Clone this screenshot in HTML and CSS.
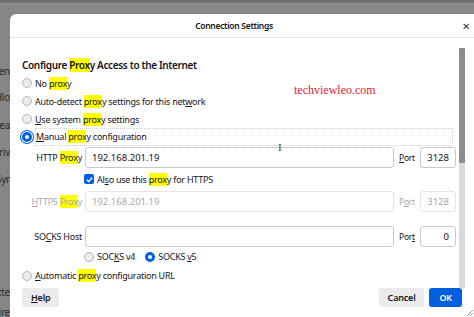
FILE: index.html
```html
<!DOCTYPE html>
<html lang="en">
<head>
  <meta charset="UTF-8">
  <title>Connection Settings</title>
  <link rel="stylesheet" href="styles.css">
</head>
<body>

  <div class="app">
    <div class="app-top"></div>
    <div class="app-side">
      <span style="top:50px">Gen</span>
      <span style="top:76px">Hlo</span>
      <span style="top:104px">Lea</span>
      <span style="top:131px">Priv</span>
      <span style="top:158px">Syr</span>
      <span style="top:271px">Exte</span>
      <span style="top:291px">Fire</span>
    </div>
  </div>

  <div class="dialog">
    <div class="dialog-head">
      <span class="dialog-title">Connection Settings</span>
      <span class="dialog-close">&#x2715;</span>
    </div>

    <div class="dialog-body">
      <h2 class="section-title">Configure <mark>Prox</mark>y Access to the Internet</h2>

      <label class="radio-row"><span class="radio"></span><span>No <mark>prox</mark>y</span></label>
      <label class="radio-row"><span class="radio"></span><span>Auto-detect <mark>prox</mark>y settings for this net<u>w</u>ork</span></label>
      <label class="radio-row"><span class="radio"></span><span><u>U</u>se system <mark>prox</mark>y settings</span></label>
      <label class="radio-row"><span class="radio checked focus"></span><span class="focus-box"><u>M</u>anual <mark>prox</mark>y configuration</span></label>

      <div class="proxy-row">
        <span class="proxy-label">HTTP <mark>Prox</mark>y</span>
        <span class="field">192.168.201.19</span>
        <span class="port-label"><u>P</u>ort</span>
        <span class="field port">3128</span>
      </div>

      <label class="check-row"><span class="checkbox"><svg viewBox="0 0 10 10" width="9" height="9"><path d="M2 5.2 L4.2 7.3 L8 2.8" fill="none" stroke="#fff" stroke-width="1.5"/></svg></span><span>Al<u>s</u>o use this <mark>prox</mark>y for HTTPS</span></label>

      <div class="proxy-row disabled">
        <span class="proxy-label"><u>H</u>TTPS <mark>Prox</mark>y</span>
        <span class="field">192.168.201.19</span>
        <span class="port-label">P<u>o</u>rt</span>
        <span class="field port">3128</span>
      </div>

      <div class="proxy-row socks">
        <span class="proxy-label">SO<u>C</u>KS Host</span>
        <span class="field"></span>
        <span class="port-label">Por<u>t</u></span>
        <span class="field port">0</span>
      </div>

      <div class="socks-row">
        <label class="radio-row"><span class="radio"></span><span>SOC<u>K</u>S v4</span></label>
        <label class="radio-row"><span class="radio checked"></span><span>SOCKS <u>v</u>5</span></label>
      </div>

      <label class="radio-row auto-row"><span class="radio"></span><span><u>A</u>utomatic <mark>prox</mark>y configuration URL</span></label>

      <div class="watermark">techviewleo.com</div>
      <div class="cursor">I</div>
    </div>

    <div class="dialog-foot">
      <button class="btn"><u>H</u>elp</button>
      <span class="spacer"></span>
      <button class="btn">Cancel</button>
      <button class="btn primary">OK</button>
    </div>

    <div class="scrollbar"><div class="thumb"></div></div>
    <svg class="grip" viewBox="0 0 10 10" width="10" height="10"><path d="M9 3 L3 9 M9 6 L6 9" stroke="#999" stroke-width="1"/></svg>
  </div>

</body>
</html>
```

FILE: styles.css
```css
body {
  margin: 0;
  width: 474px;
  height: 317px;
  overflow: hidden;
  background: #7f7f7f;
  font-family: 'Noto Sans', 'Open Sans', sans-serif;
  font-size: 9px;
  letter-spacing: -0.25px;
  color: #15141a;
  position: relative;
}

.app-top {
  height: 14px;
  background: linear-gradient(#6e6e6e 0, #6e6e6e 2px, #8c8c8c 3px, #858585 100%);
}

.app-side {
  position: relative;
  width: 10px;
  height: 303px;
  overflow: hidden;
  background: #868686;
}

.app-side span {
  position: absolute;
  right: 0;
  color: #2a2a2a;
  font-size: 10px;
  white-space: nowrap;
}

/* the modal sits over the app */
.dialog {
  position: absolute;
  left: 10px;
  top: 14px;
  right: 0;
  bottom: 0;
  background: #fff;
  border-top-left-radius: 6px;
  display: flex;
  flex-direction: column;
}

.dialog-head {
  height: 23px;
  border-bottom: 1px solid #e4e4e4;
  display: flex;
  align-items: center;
  justify-content: center;
  padding-right: 16px;
  position: relative;
}

.dialog-title {
  font-weight: 600;
  font-size: 8.5px;
  letter-spacing: -0.3px;
}

.dialog-close {
  position: absolute;
  right: 4px;
  top: 5px;
  font-size: 10px;
  color: #333;
}

.dialog-body {
  flex: 1;
  padding: 0 21px 0 12px;
  position: relative;
}

mark {
  background: #ffff00;
  color: inherit;
}

u {
  text-decoration-thickness: 1px;
  text-underline-offset: 1px;
}

.section-title {
  margin: 0;
  height: 18px;
  padding-top: 18px;
  font-size: 10px;
  letter-spacing: -0.35px;
  font-weight: 600;
  line-height: 18px;
}

.radio-row {
  display: flex;
  align-items: center;
  height: 18px;
  gap: 3px;
  white-space: nowrap;
}

.radio {
  width: 8px;
  height: 8px;
  border: 1px solid #b5b5b8;
  border-radius: 50%;
  background: #ececee;
  flex: none;
}

.radio.checked {
  width: 4px;
  height: 4px;
  border: 3px solid #0060df;
  background: #fff;
}

.radio.focus {
  box-shadow: 0 0 0 1px #fff, 0 0 0 2px #0060df;
}

.focus-box {
  flex: 1;
  height: 16px;
  line-height: 16px;
  border: 1px dotted #cfcfd8;
}

.proxy-row {
  display: grid;
  grid-template-columns: 61px 309px 22px 36px;
  column-gap: 2px;
  align-items: center;
  height: 21px;
  margin-top: 1px;
}

.proxy-label {
  text-align: right;
  padding-right: 1px;
}

.field {
  height: 19px;
  line-height: 19px;
  border: 1px solid #c9c9ce;
  border-radius: 3px;
  padding: 0 6px;
  font-size: 9.5px;
  letter-spacing: 0;
}

.field.port {
  text-align: right;
}

.port-label {
  text-align: center;
  font-size: 8.5px;
}

.proxy-row.disabled {
  color: #a8a8ad;
}

.proxy-row.disabled .field {
  border-color: #e4e4e7;
}

.proxy-row.socks {
  margin-top: 14px;
}

.check-row {
  display: flex;
  align-items: center;
  height: 22px;
  padding-left: 62px;
  gap: 3px;
}

.checkbox {
  width: 10px;
  height: 10px;
  border-radius: 2px;
  background: #0060df;
  display: flex;
  align-items: center;
  justify-content: center;
}

.socks-row {
  display: flex;
  gap: 10px;
  padding-left: 62px;
  height: 19px;
  align-items: center;
}

.radio-row.auto-row {
  height: 19px;
}

.watermark {
  position: absolute;
  left: 284px;
  top: 45px;
  font-family: 'Liberation Serif', serif;
  font-size: 12px;
  letter-spacing: 0;
  color: #e8203c;
}

.cursor {
  position: absolute;
  left: 268px;
  top: 103px;
  font-family: 'Liberation Serif', serif;
  font-size: 11px;
  color: #444;
}

.dialog-foot {
  display: flex;
  align-items: center;
  gap: 5px;
  padding: 0 12px 10px 12px;
}

.spacer {
  flex: 1;
}

.btn {
  font: inherit;
  font-weight: 600;
  letter-spacing: -0.2px;
  height: 19px;
  padding: 0 9px;
  border: none;
  border-radius: 3px;
  background: #ebebee;
  color: #15141a;
}

.btn.primary {
  background: #0060df;
  color: #fff;
  padding: 0 10px;
}

.scrollbar {
  position: absolute;
  left: 449px;
  top: 34px;
  width: 6px;
  height: 240px;
  background: #d9d9d9;
}

.thumb {
  height: 115px;
  background: #8d8d8d;
  border-radius: 1px;
}

.grip {
  position: absolute;
  right: 0;
  bottom: 0;
}
```
